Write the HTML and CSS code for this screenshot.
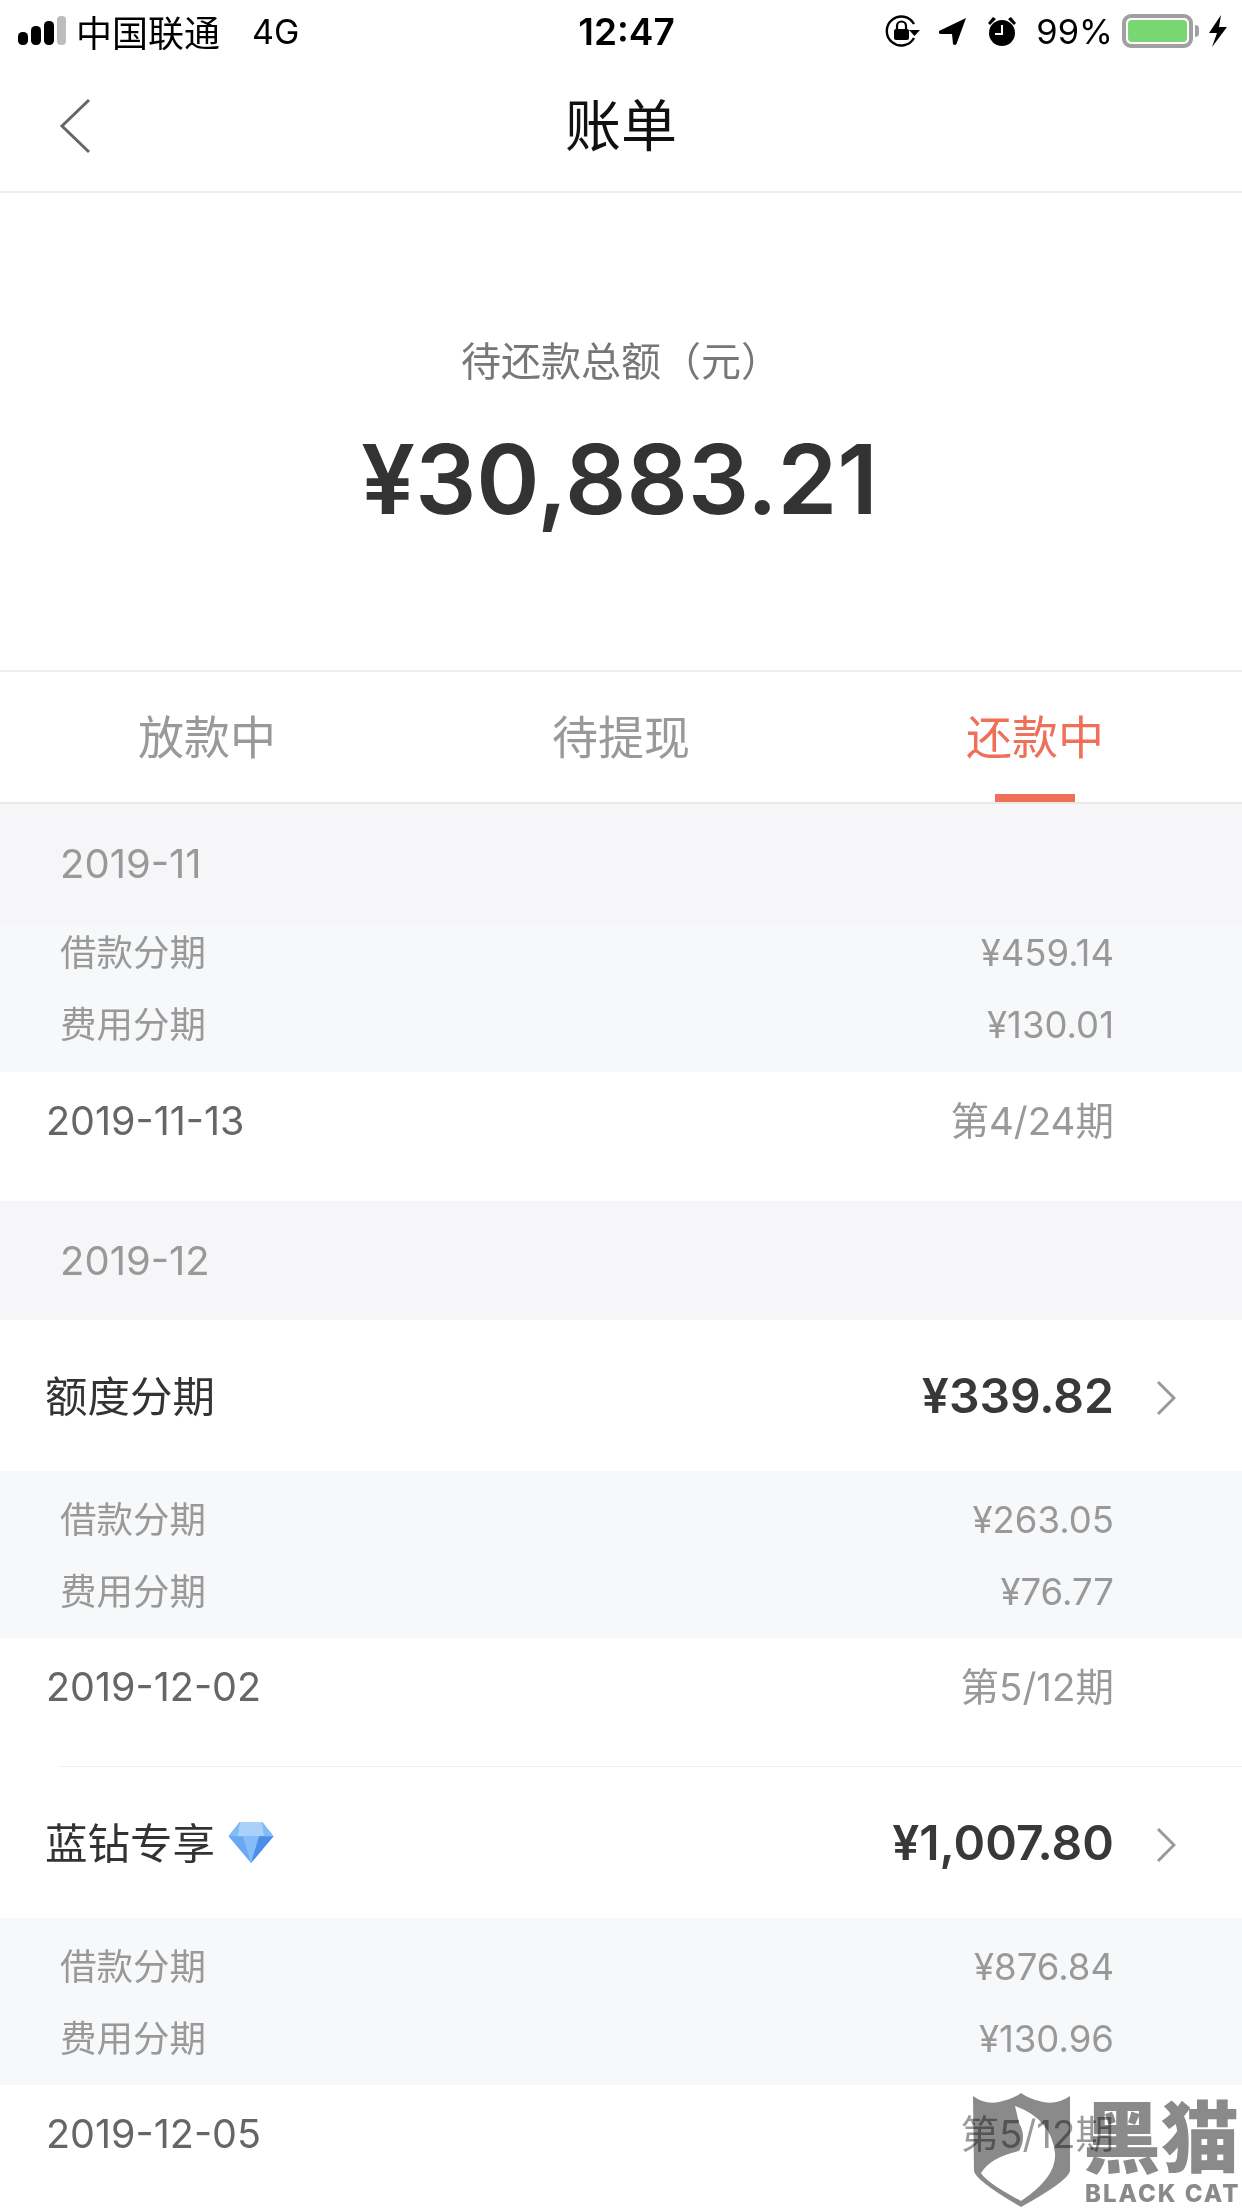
FILE: index.html
```html
<!DOCTYPE html>
<html lang="zh-CN">
<head>
    <meta charset="UTF-8">
    <title>账单</title>
    <link rel="stylesheet" href="styles.css">
</head>
<body>
    <div class="status-bar">
        <div class="status-left">
            <svg class="signal" width="48" height="32" viewBox="0 0 48 32">
                <rect x="0" y="17" width="10" height="13" rx="4.500" fill="#000"/>
                <rect x="13" y="11" width="10" height="19" rx="4.500" fill="#000"/>
                <rect x="26" y="6" width="10" height="24" rx="4.500" fill="#000"/>
                <rect x="39" y="1" width="9" height="29" rx="4" fill="#bdbdbd"/>
            </svg>
            <span class="carrier">中国联通</span>
            <span class="network">4G</span>
        </div>
        <div class="status-time">12:47</div>
        <div class="status-right">
            <svg class="lock" width="35" height="32" viewBox="0 0 35 32">
                <path d="M29 23 A14.500 14.500 0 1 1 29 9" fill="none" stroke="#000" stroke-width="2.400"/>
                <path d="M24 15 L35 15 L29.500 21 Z" fill="#000"/>
                <rect x="9" y="14" width="15" height="11" rx="2" fill="#000"/>
                <path d="M12 14 V11 A4.500 4.500 0 0 1 21 11 V14" fill="none" stroke="#000" stroke-width="2.200"/>
            </svg>
            <svg class="loc" width="28" height="28" viewBox="0 0 28 28">
                <path d="M27 1 L0 14 Q-1 17 2 17 L13 17 L14 27 Q16 29 17.500 27 Z" fill="#000"/>
            </svg>
            <svg class="alarm" width="30" height="32" viewBox="0 0 30 32">
                <circle cx="15" cy="18" r="13" fill="#000"/>
                <path d="M1 8 L6 2 L9 4 L3 10 Z M29 8 L24 2 L21 4 L27 10 Z" fill="#000"/>
                <path d="M15 10 V19 H8" fill="none" stroke="#fff" stroke-width="2"/>
            </svg>
            <span class="battery-text">99%</span>
            <div class="battery"><div class="battery-fill"></div></div>
            <div class="battery-tip"></div>
            <svg class="bolt" width="18" height="32" viewBox="0 0 18 32">
                <path d="M12 0 L0 18 L8 18 L3 32 L18 12 L10 12 Z" fill="#000"/>
            </svg>
        </div>
    </div>

    <div class="nav-bar">
        <svg class="nav-back" width="34" height="56" viewBox="0 0 34 56">
            <path d="M31 2 L4 28 L31 54" fill="none" stroke="#666" stroke-width="3"/>
        </svg>
        <div class="nav-title">账单</div>
    </div>

    <div class="summary">
        <div class="summary-label">待还款总额（元）</div>
        <div class="summary-amount">¥30,883.21</div>
    </div>

    <div class="tabs">
        <div class="tab">放款中</div>
        <div class="tab">待提现</div>
        <div class="tab tab-active">还款中</div>
    </div>

    <div class="month">2019-11</div>
    <div class="detail detail-first">
        <div class="detail-row"><span>借款分期</span><span>¥459.14</span></div>
        <div class="detail-row"><span>费用分期</span><span>¥130.01</span></div>
    </div>
    <div class="date-row"><span class="date">2019-11-13</span><span class="period">第4/24期</span></div>

    <div class="month">2019-12</div>
    <div class="item">
        <span class="item-name">额度分期</span>
        <span class="item-amount">¥339.82</span>
        <svg class="chevron" width="20" height="36" viewBox="0 0 20 36">
            <path d="M2 2 L18 18 L2 34" fill="none" stroke="#999" stroke-width="3"/>
        </svg>
    </div>
    <div class="detail">
        <div class="detail-row"><span>借款分期</span><span>¥263.05</span></div>
        <div class="detail-row"><span>费用分期</span><span>¥76.77</span></div>
    </div>
    <div class="date-row date-row-line"><span class="date">2019-12-02</span><span class="period">第5/12期</span></div>

    <div class="item">
        <span class="item-name">蓝钻专享</span>
        <svg class="gem" width="48" height="43" viewBox="0 0 46 42">
            <path d="M12 1 L34 1 L45 15 L23 41 L1 15 Z" fill="#6aa9f2"/>
            <path d="M12 1 L34 1 L36 15 L10 15 Z" fill="#a9d0f8"/>
            <path d="M15 15 L31 15 L23 41 Z" fill="#86bdf6"/>
            <path d="M31 15 L45 15 L23 41 Z" fill="#4a8eea"/>
            <path d="M12 1 L1 15 L10 15 Z M34 1 L45 15 L36 15 Z" fill="#80bdf8"/>
        </svg>
        <span class="item-amount">¥1,007.80</span>
        <svg class="chevron" width="20" height="36" viewBox="0 0 20 36">
            <path d="M2 2 L18 18 L2 34" fill="none" stroke="#999" stroke-width="3"/>
        </svg>
    </div>
    <div class="detail">
        <div class="detail-row"><span>借款分期</span><span>¥876.84</span></div>
        <div class="detail-row"><span>费用分期</span><span>¥130.96</span></div>
    </div>
    <div class="date-row"><span class="date">2019-12-05</span><span class="period">第5/12期</span></div>

    <div class="watermark">
        <svg class="wm-shield" width="98" height="115" viewBox="0 0 98 115">
            <path d="M0 3 Q12 12 26 9 Q40 6 48 0 Q56 6 70 9 Q84 12 97 3 V78 Q95 88 48 114 Q3 88 1 78 Z" fill="#8a8a8a"/>
            <path d="M42 13 Q78 26 82 60 Q84 84 48 108 Q14 90 8 80 Q18 64 46 58 Q54 44 46 30 Z" fill="#fff"/>
        </svg>
        <div class="wm-text">
            <div class="wm-cn">黑猫</div>
            <div class="wm-en">BLACK CAT</div>
        </div>
    </div>
</body>
</html>
```
FILE: styles.css
```css
* {
    box-sizing: border-box;
}

html, body {
    margin: 0;
    padding: 0;
}

body {
    width: 1242px;
    height: 2208px;
    overflow: hidden;
    position: relative;
    background-color: #fff;
    font-family: Inter, "Noto Sans CJK SC", sans-serif;
}

.status-bar {
    height: 62px;
    display: flex;
    align-items: center;
    justify-content: space-between;
    padding: 0 15px 0 18px;
    color: #000;
}

.status-left {
    display: flex;
    align-items: center;
    width: 400px;
}

.signal {
    margin-right: 10px;
}

.carrier {
    font-size: 36px;
}

.network {
    font-size: 34px;
    margin-left: 32px;
}

.status-time {
    font-size: 37px;
    font-weight: 600;
    margin-left: 8px;
}

.status-right {
    display: flex;
    align-items: center;
    width: 400px;
    justify-content: flex-end;
}

.loc {
    margin-left: 19px;
}

.alarm {
    margin-left: 20px;
}

.battery-text {
    font-size: 34.500px;
    margin-left: 19px;
}

.battery {
    width: 71px;
    height: 34px;
    margin-left: 9px;
    border: 4px solid #a0a0a0;
    border-radius: 9px;
    padding: 2px;
}

.battery-fill {
    height: 100%;
    background-color: #77d873;
    border-radius: 4px;
}

.battery-tip {
    width: 4px;
    height: 12px;
    margin-left: 2px;
    background-color: #a0a0a0;
    border-radius: 0 4px 4px 0;
}

.bolt {
    margin-left: 10px;
}

.nav-bar {
    height: 131px;
    padding-bottom: 10px;
    border-bottom: 2px solid #eeeeee;
    display: flex;
    align-items: center;
    justify-content: center;
    position: relative;
}

.nav-back {
    position: absolute;
    left: 58px;
    top: 36px;
}

.nav-title {
    font-size: 56px;
    color: #111;
}

.summary {
    height: 479px;
    border-bottom: 2px solid #eeeeee;
    text-align: center;
    padding-top: 137px;
}

.summary-label {
    font-size: 40px;
    color: #777;
    line-height: 60px;
    margin-top: 2px;
}

.summary-amount {
    font-size: 96px;
    font-weight: 600;
    color: #333;
    line-height: 120px;
    margin-top: 27px;
    padding-right: 3px;
}

.tabs {
    height: 132px;
    display: flex;
    border-bottom: 2px solid #e9e9e9;
}

.tab {
    flex: 1;
    text-align: center;
    font-size: 46px;
    color: #999;
    line-height: 130px;
    position: relative;
}

.tab-active {
    color: #ef7059;
}

.tab-active::after {
    content: "";
    position: absolute;
    left: 50%;
    bottom: 0;
    width: 80px;
    height: 8px;
    margin-left: -40px;
    background-color: #ef7059;
}

.month {
    height: 119px;
    padding-left: 60px;
    line-height: 120px;
    font-size: 40px;
    color: #999;
    background-color: #f6f6f8;
}

.detail {
    height: 167px;
    padding: 13px 128px 0 60px;
    background-color: #f7f8fa;
    font-size: 36.500px;
    color: #999;
}

.detail-first {
    height: 149px;
    padding-top: 2px;
}

.detail-first .detail-row:first-child {
    height: 64px;
    line-height: 56px;
}

.detail-row {
    display: flex;
    justify-content: space-between;
    height: 72px;
    line-height: 72px;
}

.date-row {
    height: 129px;
    padding: 17px 128px 0 46px;
    display: flex;
    justify-content: space-between;
    align-items: flex-start;
    position: relative;
}

.date-row-line::after {
    content: "";
    position: absolute;
    left: 59px;
    right: 0;
    bottom: 0;
    height: 1px;
    background-color: #eeeeee;
}

.date {
    font-size: 39.500px;
    line-height: 64px;
    color: #666;
}

.period {
    font-size: 38.500px;
    line-height: 64px;
    color: #999;
}

.item {
    height: 151px;
    padding: 0 66px 0 45px;
    display: flex;
    align-items: center;
}

.item-name {
    font-size: 42.500px;
    color: #333;
    margin-top: -5px;
}

.gem {
    margin-left: 12px;
}

.item-amount {
    margin-left: auto;
    font-size: 48px;
    font-weight: 600;
    color: #383838;
}

.chevron {
    margin-left: 42px;
    margin-top: 4px;
}

.watermark {
    position: absolute;
    left: 973px;
    top: 2093px;
    display: flex;
    mix-blend-mode: multiply;
}

.wm-text {
    margin-left: 12px;
    color: #8a8a8a;
}

.wm-cn {
    font-size: 78px;
    font-weight: 900;
    line-height: 84px;
    margin-top: 4px;
    white-space: nowrap;
}

.wm-en {
    font-size: 24px;
    font-weight: 800;
    line-height: 26px;
    letter-spacing: 2px;
    margin-left: 2px;
    white-space: nowrap;
}
```
